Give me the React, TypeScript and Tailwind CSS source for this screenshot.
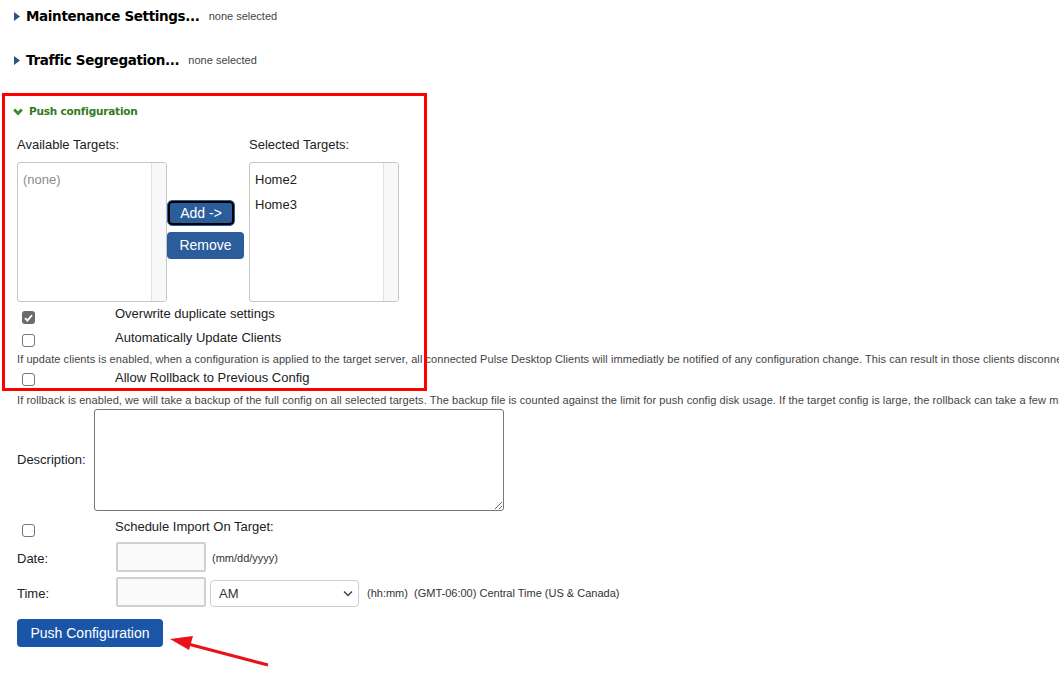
import React from "react";

function Triangle() {
  return (
    <svg width="6" height="9" viewBox="0 0 6 9" className="mr-[6px]">
      <path d="M0 0 L6 4.5 L0 9 Z" fill="#2d5284" />
    </svg>
  );
}

function Checkbox({ checked = false }: { checked?: boolean }) {
  return checked ? (
    <span className="flex h-[13px] w-[13px] items-center justify-center rounded-[3px] bg-[#6b6b6b]">
      <svg width="9" height="8" viewBox="0 0 9 8">
        <path d="M1 4.2 L3.4 6.6 L8 1.2" stroke="#fff" strokeWidth="1.8" fill="none" />
      </svg>
    </span>
  ) : (
    <span className="block h-[13px] w-[13px] rounded-[3px] border border-[#767676] bg-white" />
  );
}

function ListBox({ items, placeholder }: { items: string[]; placeholder?: string }) {
  return (
    <div className="flex h-[140px] w-[150px] rounded-[3px] border border-[#c6c6c6] bg-white">
      <div className="flex-1 pl-[5px] pt-[9px] text-[13px] leading-[16px]">
        {placeholder && <div className="text-[#8c8c8c]">{placeholder}</div>}
        {items.map((item) => (
          <div key={item} className="mb-[9px] text-[#222]">
            {item}
          </div>
        ))}
      </div>
      <div className="w-[15px] rounded-r-[3px] border-l border-[#e3e3e3] bg-[#f8f8f8]" />
    </div>
  );
}

function OptionRow({
  label,
  checked,
  boxOffset,
}: {
  label: string;
  checked?: boolean;
  boxOffset: string;
}) {
  return (
    <div className="flex h-[15px] items-start text-[13px] leading-[15px] text-[#222]">
      <div className={`w-[98px] pl-[5px] ${boxOffset}`}>
        <Checkbox checked={checked} />
      </div>
      <span>{label}</span>
    </div>
  );
}

export default function App() {
  return (
    <div className="relative h-[697px] w-[1059px] overflow-hidden bg-white font-['Liberation_Sans',Arial,sans-serif] text-[#222]">
      {/* collapsed sections */}
      <div className="mt-[7px] flex h-[18px] items-center pl-[14px]">
        <Triangle />
        <span className="font-['DejaVu_Sans',Verdana,sans-serif] text-[13.5px] font-bold tracking-[-0.35px] text-black">
          Maintenance Settings...
        </span>
        <span className="ml-[9px] text-[11px] text-[#444]">none selected</span>
      </div>
      <div className="mt-[26px] flex h-[18px] items-center pl-[14px]">
        <Triangle />
        <span className="font-['DejaVu_Sans',Verdana,sans-serif] text-[13.5px] font-bold tracking-[-0.35px] text-black">
          Traffic Segregation...
        </span>
        <span className="ml-[9px] text-[11px] text-[#444]">none selected</span>
      </div>

      {/* push configuration */}
      <div className="mt-[36px] flex h-[14px] items-center pl-[13px]">
        <svg width="10" height="8" viewBox="0 0 10 8" className="mr-[6px]">
          <path d="M1.2 1.5 L5 5.5 L8.8 1.5" stroke="#3a8a22" strokeWidth="2.8" fill="none" />
        </svg>
        <span className="font-['DejaVu_Sans',Verdana,sans-serif] text-[10.5px] font-bold tracking-[-0.2px] text-[#2f7a1c]">
          Push configuration
        </span>
      </div>

      <div className="pl-[17px]">
        <div className="mt-[18px] flex h-[16px] text-[13px] leading-[16px]">
          <span className="w-[232px]">Available Targets:</span>
          <span>Selected Targets:</span>
        </div>

        <div className="mt-[9px] flex">
          <ListBox items={[]} placeholder="(none)" />
          <div className="flex w-[82px] flex-col items-start pt-[38px]">
            <div className="rounded-[5px] border border-[#2a5d9a]">
              <button className="h-[24px] w-[66px] rounded-[4px] border-2 border-black bg-[#2a5d9a] text-[14px] leading-[20px] text-white">
                Add -&gt;
              </button>
            </div>
            <button className="mt-[6px] h-[27px] w-[77px] rounded-[4px] bg-[#2a5d9a] text-[14px] text-white">
              Remove
            </button>
          </div>
          <ListBox items={["Home2", "Home3"]} />
        </div>

        <div className="mt-[4px]">
          <OptionRow label="Overwrite duplicate settings" checked boxOffset="pt-[5px]" />
        </div>
        <div className="mt-[9px]">
          <OptionRow label="Automatically Update Clients" boxOffset="pt-[4px]" />
        </div>
        <div className="mt-[8px] whitespace-nowrap text-[11px] leading-[13px] tracking-[0.07px] text-[#444]">
          If update clients is enabled, when a configuration is applied to the target server, all connected Pulse Desktop Clients will immediatly be notified of any configuration change. This can result in those clients disconnecting and reconnecting to the server.
        </div>
        <div className="mt-[4px]">
          <OptionRow label="Allow Rollback to Previous Config" boxOffset="pt-[3px]" />
        </div>
        <div className="mt-[9px] whitespace-nowrap text-[11px] leading-[13px] tracking-[0.07px] text-[#444]">
          If rollback is enabled, we will take a backup of the full config on all selected targets. The backup file is counted against the limit for push config disk usage. If the target config is large, the rollback can take a few minutes to complete.
        </div>

        <div className="mt-[2px] flex items-center">
          <span className="w-[77px] text-[13px]">Description:</span>
          <textarea className="h-[102px] w-[410px] resize rounded-[3px] border border-[#767676] bg-white" />
        </div>

        <div className="mt-[8px]">
          <OptionRow label="Schedule Import On Target:" boxOffset="pt-[5px]" />
        </div>

        <div className="mt-[8px] flex items-center">
          <span className="mt-[3px] w-[99px] text-[13px]">Date:</span>
          <input className="h-[30px] w-[90px] rounded-[2px] border-2 border-[#d0d0d0] bg-[#fafafa]" />
          <span className="ml-[6px] mt-[3px] text-[11px] text-[#333]">(mm/dd/yyyy)</span>
        </div>

        <div className="mt-[5px] flex items-center">
          <span className="mt-[3px] w-[99px] text-[13px]">Time:</span>
          <input className="h-[30px] w-[90px] rounded-[2px] border-2 border-[#d0d0d0] bg-[#fafafa]" />
          <div className="ml-[4px] mt-[3px] flex h-[27px] w-[149px] items-center justify-between rounded-[4px] border border-[#cfcfcf] bg-white pl-[8px] pr-[5px] text-[13px] text-[#333]">
            <span>AM</span>
            <svg width="10" height="7" viewBox="0 0 10 7">
              <path d="M1 1.5 L5 5.5 L9 1.5" stroke="#444" strokeWidth="1.5" fill="none" />
            </svg>
          </div>
          <span className="ml-[8px] mt-[3px] whitespace-pre text-[11px] text-[#333]">
            (hh:mm)  (GMT-06:00) Central Time (US &amp; Canada)
          </span>
        </div>

        <button className="mt-[12px] h-[28px] w-[146px] rounded-[4px] bg-[#1b55a8] text-[14px] text-white">
          Push Configuration
        </button>
      </div>

      {/* annotation overlays */}
      <div className="pointer-events-none absolute left-[2px] top-[93px] h-[298px] w-[425px] border-[3px] border-[#ff0000]" />
      <svg
        className="pointer-events-none absolute left-0 top-0"
        width="1059"
        height="697"
        viewBox="0 0 1059 697"
      >
        <line x1="268" y1="665" x2="188" y2="644" stroke="#e8131a" strokeWidth="3" />
        <path d="M170 639 L193 636 L189 650 Z" fill="#e8131a" />
      </svg>
    </div>
  );
}
